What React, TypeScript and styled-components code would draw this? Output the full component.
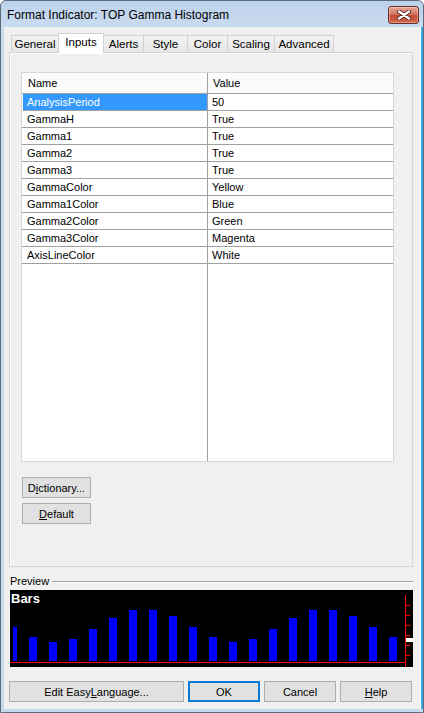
import React from "react";
import styled, { createGlobalStyle } from "styled-components";

const Global = createGlobalStyle`
  body {
    margin: 0;
    background: #ffffff;
    font-family: "Liberation Sans", Arial, sans-serif;
    font-size: 11px;
    color: #000;
  }
`;

const Window = styled.div`
  width: 424px;
  height: 713px;
  box-sizing: border-box;
  border: 1px solid #5d6b7b;
  border-radius: 6px 6px 0 0;
  background: linear-gradient(#bdd2eb, #c9dbf0 26px, #c7daef);
  display: flex;
  flex-direction: column;
  overflow: hidden;
`;

const TitleBar = styled.div`
  height: 26px;
  flex: none;
  display: flex;
  align-items: center;
  justify-content: space-between;
  padding: 0 4px 0 6px;
`;

const Title = styled.div`
  font-size: 12px;
  color: #000;
  padding-top: 1px;
`;

const CloseButton = styled.div`
  width: 31px;
  height: 18px;
  box-sizing: border-box;
  border: 1px solid #6e2b22;
  border-radius: 3px;
  background: linear-gradient(#e9a99b, #d4775f 45%, #c14a2e 55%, #d0694c);
  box-shadow: inset 0 0 0 1px rgba(255, 255, 255, 0.35);
  display: flex;
  align-items: center;
  justify-content: center;
  margin-top: 1px;
`;

const Client = styled.div`
  flex: 1;
  margin: 0 3px 3px 3px;
  background: #f0f0f0;
  padding: 6px 7px 0 5px;
  display: flex;
  flex-direction: column;
  box-shadow: 1px 0 0 #ffffff, 3px 0 0 #3aa9e0;
`;

const TabStrip = styled.div`
  height: 19px;
  display: flex;
  align-items: flex-end;
  padding-left: 2px;
`;

const Tab = styled.div<{ $w: number; $active?: boolean }>`
  width: ${(p) => p.$w}px;
  height: ${(p) => (p.$active ? 20 : 17)}px;
  box-sizing: border-box;
  margin-left: -1px;
  margin-bottom: ${(p) => (p.$active ? -1 : 0)}px;
  border: 1px solid #d2d2d2;
  border-bottom: none;
  background: ${(p) => (p.$active ? "#ffffff" : "linear-gradient(#f2f2f2, #e6e6e6)")};
  position: relative;
  z-index: ${(p) => (p.$active ? 2 : 1)};
  display: flex;
  justify-content: center;
  padding-top: 2px;
  font-size: 11.5px;
  &:first-child {
    margin-left: 0;
  }
`;

const Panel = styled.div`
  height: 515px;
  box-sizing: border-box;
  border: 1px solid #d5d5d5;
  box-shadow: inset 1px 1px 0 #ffffff;
  padding: 19px 18px 0 11px;
  display: flex;
  flex-direction: column;
  align-items: flex-start;
`;

const Grid = styled.div`
  width: 373px;
  height: 390px;
  box-sizing: border-box;
  border: 1px solid #d8d8d8;
  background: #ffffff;
  display: grid;
  grid-template-columns: 186px 1fr;
  grid-template-rows: 21px repeat(10, 17px) 1fr;
`;

const HeadCell = styled.div<{ $first?: boolean }>`
  border-bottom: 1px solid #a0a0a0;
  border-right: ${(p) => (p.$first ? "1px solid #a0a0a0" : "none")};
  background: #fbfbfb;
  padding: 4px 0 0 ${(p) => (p.$first ? 6 : 5)}px;
`;

const Cell = styled.div<{ $first?: boolean; $selected?: boolean }>`
  border-bottom: 1px solid #a0a0a0;
  border-right: ${(p) => (p.$first ? "1px solid #a0a0a0" : "none")};
  padding-top: 2px;
  margin-left: ${(p) => (p.$selected ? 1 : 0)}px;
  padding-left: ${(p) => (p.$selected ? 4 : p.$first ? 5 : 4)}px;
  background: ${(p) => (p.$selected ? "#3399ff" : "transparent")};
  color: ${(p) => (p.$selected ? "#ffffff" : "#000000")};
  white-space: nowrap;
`;

const Filler = styled.div<{ $first?: boolean }>`
  border-right: ${(p) => (p.$first ? "1px solid #a0a0a0" : "none")};
`;

const Button = styled.div<{ $w: number; $focus?: boolean }>`
  width: ${(p) => p.$w}px;
  height: 21px;
  box-sizing: border-box;
  border: ${(p) => (p.$focus ? "2px solid #0a7bd6" : "1px solid #adadad")};
  background: #e1e1e1;
  display: flex;
  align-items: center;
  justify-content: center;
  flex: none;
  u {
    text-decoration-thickness: 1px;
    text-underline-offset: 1px;
  }
`;

const SideButtons = styled.div`
  display: flex;
  flex-direction: column;
  gap: 5px;
  margin: 15px 0 0 1px;
`;

const PreviewHeader = styled.div`
  height: 16px;
  margin-top: 6px;
  display: flex;
  align-items: center;
  gap: 3px;
  padding-left: 1px;
`;

const Rule = styled.div`
  flex: 1;
  border-top: 1px solid #a0a0a0;
  border-bottom: 1px solid #ffffff;
  margin-top: 1px;
`;

const Chart = styled.svg`
  display: block;
  margin: 1px 0 0 1px;
  background: #000000;
  shape-rendering: crispEdges;
`;

const Footer = styled.div`
  display: flex;
  gap: 4px;
  margin-top: 14px;
`;

const tabs = [
  { label: "General", w: 48 },
  { label: "Inputs", w: 46, active: true },
  { label: "Alerts", w: 41 },
  { label: "Style", w: 45 },
  { label: "Color", w: 41 },
  { label: "Scaling", w: 48 },
  { label: "Advanced", w: 60 },
];

const inputs: [string, string][] = [
  ["AnalysisPeriod", "50"],
  ["GammaH", "True"],
  ["Gamma1", "True"],
  ["Gamma2", "True"],
  ["Gamma3", "True"],
  ["GammaColor", "Yellow"],
  ["Gamma1Color", "Blue"],
  ["Gamma2Color", "Green"],
  ["Gamma3Color", "Magenta"],
  ["AxisLineColor", "White"],
];

const barTops = [37, 47, 52, 49, 39, 28, 20, 20, 26, 37, 47, 52, 49, 39, 28, 20, 20, 26, 37, 47];

function PreviewChart() {
  return (
    <Chart width={403} height={77} viewBox="0 0 403 77">
      <text
        x={1}
        y={13}
        fill="#ffffff"
        fontFamily="Liberation Sans, Arial, sans-serif"
        fontSize={13}
        fontWeight="bold"
        style={{ shapeRendering: "auto" }}
      >
        Bars
      </text>
      {barTops.map((t, i) => {
        const x = i === 0 ? 3 : 19 + (i - 1) * 20;
        const w = i === 0 ? 4 : 8;
        return <rect key={i} x={x} y={t} width={w} height={71 - t} fill="#0000ff" />;
      })}
      <rect x={0} y={72} width={396} height={1} fill="#ff0000" />
      <rect x={395} y={5} width={1} height={72} fill="#ff0000" />
      {[15, 25, 35, 45, 55, 65].map((y) => (
        <rect key={y} x={395} y={y} width={5} height={1} fill="#ff0000" />
      ))}
      <rect x={396} y={48} width={7} height={4} fill="#ffffff" />
    </Chart>
  );
}

export default function App() {
  return (
    <>
      <Global />
      <Window>
        <TitleBar>
          <Title>Format Indicator: TOP Gamma Histogram</Title>
          <CloseButton>
            <svg width="14" height="10" viewBox="0 0 14 10">
              <path d="M2 1.5 L12 8.5 M12 1.5 L2 8.5" stroke="#4b2520" strokeWidth="4" strokeLinecap="round" />
              <path d="M2 1.5 L12 8.5 M12 1.5 L2 8.5" stroke="#ffffff" strokeWidth="2.4" strokeLinecap="round" />
            </svg>
          </CloseButton>
        </TitleBar>
        <Client>
          <TabStrip>
            {tabs.map((t) => (
              <Tab key={t.label} $w={t.w} $active={t.active}>
                {t.label}
              </Tab>
            ))}
          </TabStrip>
          <Panel>
            <Grid>
              <HeadCell $first>Name</HeadCell>
              <HeadCell>Value</HeadCell>
              {inputs.map(([name, value], i) => (
                <React.Fragment key={name}>
                  <Cell $first $selected={i === 0}>
                    {name}
                  </Cell>
                  <Cell>{value}</Cell>
                </React.Fragment>
              ))}
              <Filler $first />
              <Filler />
            </Grid>
            <SideButtons>
              <Button $w={69}>
                D<u>i</u>ctionary...
              </Button>
              <Button $w={69}>
                <u>D</u>efault
              </Button>
            </SideButtons>
          </Panel>
          <PreviewHeader>
            <span>Preview</span>
            <Rule />
          </PreviewHeader>
          <PreviewChart />
          <Footer>
            <Button $w={175}>
              Edit Easy<u>L</u>anguage...
            </Button>
            <Button $w={72} $focus>
              OK
            </Button>
            <Button $w={72}>Cancel</Button>
            <Button $w={72}>
              <u>H</u>elp
            </Button>
          </Footer>
        </Client>
      </Window>
    </>
  );
}
